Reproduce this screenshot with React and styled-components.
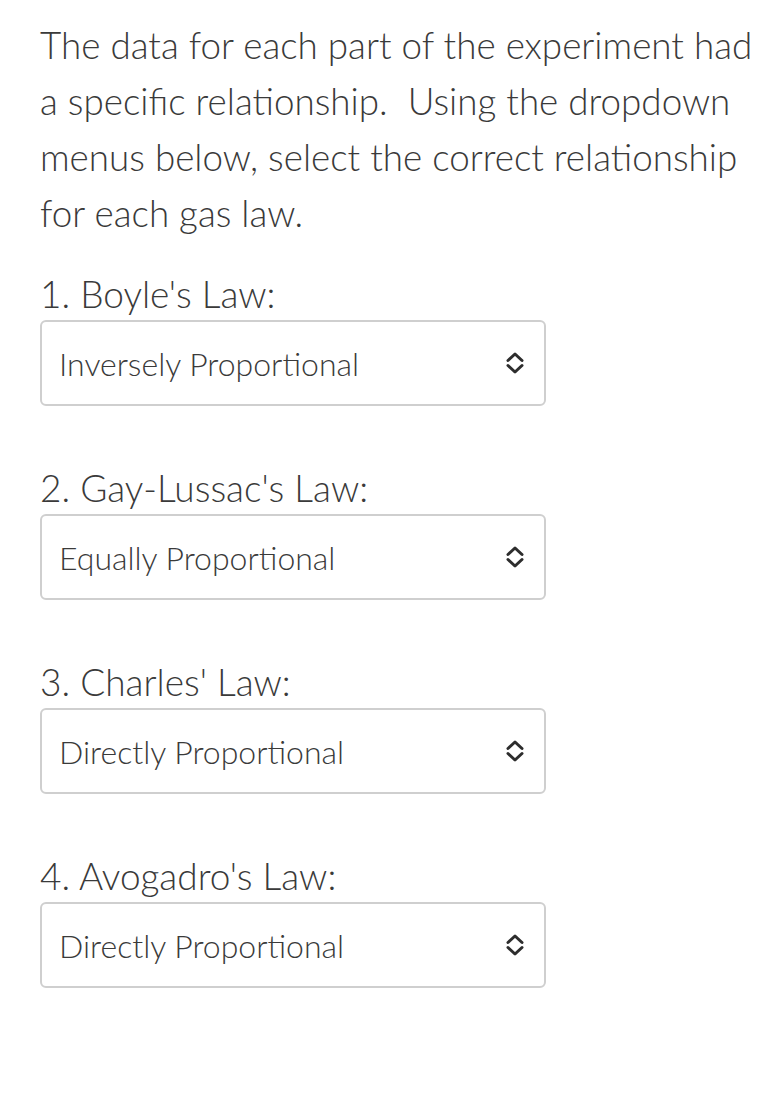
import React from "react";
import styled, { createGlobalStyle } from "styled-components";

const Global = createGlobalStyle`
  html, body { margin: 0; padding: 0; background: #fff; }
  body { font-family: Lato, "Open Sans", sans-serif; color: #3d3d3d; }
`;

const Page = styled.div`
  padding: 17px 0 0 40px;
  width: 769px;
  box-sizing: border-box;
`;

const Intro = styled.p`
  margin: 0 0 35px;
  font-size: 36.8px;
  line-height: 56px;
  font-weight: 300;
  color: #3a3a3a;
`;

const Question = styled.div`
  display: flex;
  flex-direction: column;
  margin-bottom: 64px;
`;

const Label = styled.div`
  font-size: 37px;
  font-weight: 300;
  line-height: 36px;
  color: #3a3a3a;
  margin-bottom: 8px;
`;

const SelectBox = styled.div`
  width: 506px;
  height: 86px;
  box-sizing: border-box;
  border: 2px solid #cfcfcf;
  border-radius: 6px;
  display: flex;
  align-items: center;
  justify-content: space-between;
  padding: 0 18px 0 17px;
  font-size: 32px;
  font-weight: 300;
  color: #3a3a3a;
`;

const Chevrons = () => (
  <svg width="22" height="24" viewBox="0 0 22 24" fill="none" stroke="#2d2d2d" strokeWidth="3" strokeLinecap="round" strokeLinejoin="round">
    <polyline points="4,9.5 11,3 18,9.5" />
    <polyline points="4,14.5 11,21 18,14.5" />
  </svg>
);

const items = [
  ["1. Boyle's Law:", "Inversely Proportional"],
  ["2. Gay-Lussac's Law:", "Equally Proportional"],
  ["3. Charles' Law:", "Directly Proportional"],
  ["4. Avogadro's Law:", "Directly Proportional"],
];

export default function App() {
  return (
    <>
      <Global />
      <Page>
        <Intro>
          The data for each part of the experiment had a specific relationship.&nbsp; Using the dropdown menus below, select the correct relationship for each gas law.
        </Intro>
        {items.map(([label, value]) => (
          <Question key={label}>
            <Label>{label}</Label>
            <SelectBox>
              <span>{value}</span>
              <Chevrons />
            </SelectBox>
          </Question>
        ))}
      </Page>
    </>
  );
}
